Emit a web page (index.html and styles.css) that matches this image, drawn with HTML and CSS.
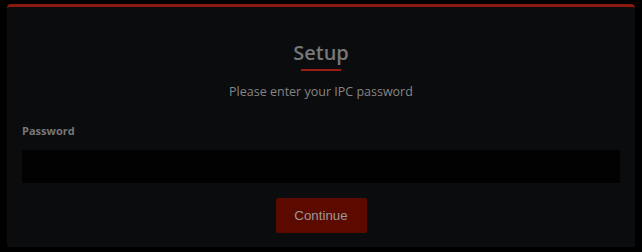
FILE: index.html
```html
<!DOCTYPE html>
<html>
<head>
<meta charset="utf-8">
<link rel="stylesheet" href="styles.css">
</head>
<body>
<div class="card">
  <h1 class="title">Setup</h1>
  <div class="rule"></div>
  <p class="subtitle">Please enter your IPC password</p>
  <label class="label" for="pw">Password</label>
  <input class="input" id="pw" type="password">
  <div class="actions"><button class="btn">Continue</button></div>
</div>
</body>
</html>
```
FILE: styles.css
```css
html, body { background: #000; }
body {
  margin: 0;
  padding: 4px 7px 5px 7px;
  font-family: "Open Sans", "Noto Sans", sans-serif;
}
.card {
  background: #0b0c0e;
  border-top: 3px solid #8b1a0e;
  border-radius: 4px 4px 2px 2px;
  padding: 0 15px;
  height: 240px;
  box-sizing: content-box;
  display: flex;
  flex-direction: column;
}
.title {
  margin: 32px 0 0 0;
  text-align: center;
  font-size: 20px;
  font-weight: 600;
  line-height: 28px;
  color: #777;
}
.rule {
  align-self: center;
  width: 40px;
  height: 2px;
  background: #9b1c14;
  margin-top: 2px;
}
.subtitle {
  margin: 13px 0 0 0;
  text-align: center;
  font-size: 12.5px;
  line-height: 16px;
  color: #858585;
}
.label {
  margin-top: 24px;
  font-size: 11px;
  font-weight: 700;
  line-height: 14px;
  color: #777;
}
.input {
  margin-top: 12px;
  height: 33px;
  box-sizing: border-box;
  border: none;
  background: #020202;
  outline: none;
}
.actions {
  display: flex;
  justify-content: center;
  margin-top: 15px;
}
.btn {
  width: 91px;
  height: 35px;
  border: none;
  border-radius: 2px;
  background: #5c0a00;
  color: #999;
  font-family: "Liberation Sans", Arial, sans-serif;
  font-size: 13.33px;
}
```
